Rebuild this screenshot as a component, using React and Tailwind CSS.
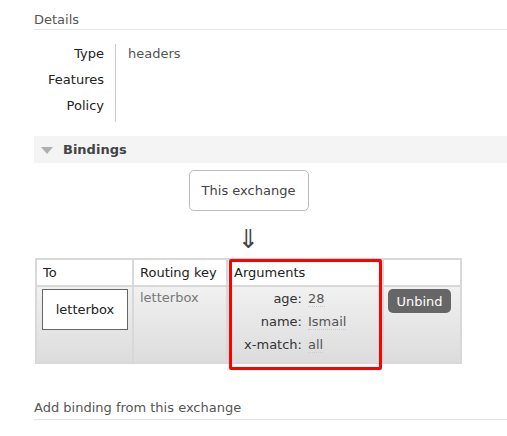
import React from "react";

const args = [
  ["age", "28"],
  ["name", "Ismail"],
  ["x-match", "all"],
];

const details = [
  ["Type", "headers"],
  ["Features", ""],
  ["Policy", ""],
];

export default function App() {
  return (
    <div className="min-h-screen bg-white pl-[34px] font-['DejaVu_Sans',sans-serif] text-[13px] text-[#222]">
      <h3 className="pt-[11px] pb-0 leading-[18px] text-[#555] border-b border-[#e4e4e4]">Details</h3>

      <div className="mt-[14px] flex">
        <div className="w-[81px] pr-[11px] text-right">
          {details.map(([label]) => (
            <div key={label} className="h-[26px] pt-[2px] leading-[16px]">{label}</div>
          ))}
        </div>
        <div className="border-l border-[#ccc] pl-[12px] text-[#555]">
          {details.map(([label, value]) => (
            <div key={label} className="h-[26px] pt-[2px] leading-[16px]">{value}</div>
          ))}
        </div>
      </div>

      <div className="mt-[14px] h-[27px] bg-[#f4f4f4] flex items-center pl-[7px]">
        <svg width="12" height="7" viewBox="0 0 12 7" className="mt-[1px]">
          <polygon points="0,0 12,0 6,7" fill="#b0b0b0" />
        </svg>
        <span className="ml-[10px] font-bold text-[#444]">Bindings</span>
      </div>

      <div className="ml-[1px] w-[427px] flex flex-col items-center">
        <div className="mt-[7px] w-[120px] h-[41px] rounded-[5px] border border-[#bbb] flex items-center justify-center text-[#444]">
          This exchange
        </div>
        <div className="h-[47px] pt-[6px] flex items-center justify-center font-['Noto_Sans','DejaVu_Sans',sans-serif] text-[26px] leading-none text-[#444]">⇓</div>

        <div className="relative w-full">
          <table className="w-full table-fixed border-collapse border-2 border-[#d8d8d8]">
            <colgroup>
              <col className="w-[97px]" />
              <col className="w-[94px]" />
              <col className="w-[156px]" />
              <col />
            </colgroup>
            <thead>
              <tr className="h-[27px] bg-white">
                <th className="border-2 border-[#d8d8d8] pl-[6px] text-left font-normal">To</th>
                <th className="border-2 border-[#d8d8d8] pl-[6px] text-left font-normal">Routing key</th>
                <th className="border-2 border-[#d8d8d8] pl-[6px] text-left font-normal">Arguments</th>
                <th className="border-2 border-[#d8d8d8]"></th>
              </tr>
            </thead>
            <tbody>
              <tr className="h-[77px] bg-gradient-to-b from-[#f1f1f1] to-[#dcdcdc] align-top">
                <td className="border-2 border-[#d8d8d8] pl-[5px] pr-[4px] pt-[2px]">
                  <div className="h-[41px] border border-[#666] bg-white flex items-center justify-center">letterbox</div>
                </td>
                <td className="border-2 border-[#d8d8d8] pl-[6px] pt-[3px] leading-[16px] text-[#777]">letterbox</td>
                <td className="border-2 border-[#d8d8d8] pl-[6px]">
                  <div className="grid grid-cols-[68px_auto] gap-x-[6px]">
                    {args.map(([k, v]) => (
                      <React.Fragment key={k}>
                        <div className="h-[23px] leading-[23px] text-right text-[#333]">{k}:</div>
                        <div className="h-[23px] leading-[23px] text-[#555]">
                          <span className="border-b border-dotted border-[#ccc]">{v}</span>
                        </div>
                      </React.Fragment>
                    ))}
                  </div>
                </td>
                <td className="border-2 border-[#d8d8d8] pl-[4px] pt-[2px]">
                  <button className="w-[63px] h-[24px] rounded-[5px] bg-[#666] text-white text-[13px] leading-none">Unbind</button>
                </td>
              </tr>
            </tbody>
          </table>
          <div className="absolute left-[194px] top-[1px] w-[153px] h-[111px] border-[3px] border-[#ff0000] rounded-[2px] pointer-events-none" />
        </div>
      </div>

      <h3 className="mt-[35px] pb-[2px] leading-[18px] text-[#555] border-b border-[#e4e4e4]">Add binding from this exchange</h3>
    </div>
  );
}
